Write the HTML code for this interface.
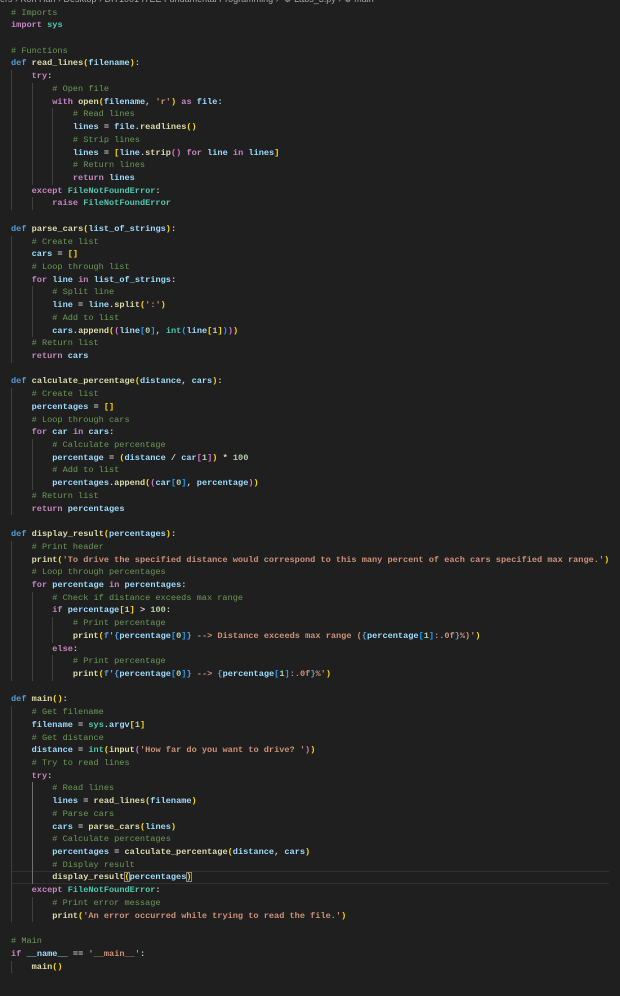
<!DOCTYPE html>
<html><head><meta charset="utf-8"><style>
html,body{margin:0;padding:0;background:#1f1f1f;width:620px;height:996px;overflow:hidden}
.bc{position:absolute;top:-6px;left:0;font:9px "Liberation Sans",sans-serif;color:#a9a9a9;white-space:pre}
.code{position:absolute;left:11px;top:6.6px;margin:0;font-family:"Liberation Mono",monospace;font-size:8.6px;line-height:12.73px;color:#d4d4d4;font-weight:bold}
.code div{height:12.73px;white-space:pre}
i{display:inline-block;width:4ch;height:12.73px;vertical-align:top;box-shadow:inset 1px 0 0 #404040;font-style:normal}
.c{color:#6a9955;font-weight:normal}.k{color:#c586c0}.d{color:#569cd6}.f{color:#dcdcaa}.v{color:#9cdcfe}.s{color:#ce9178}.n{color:#b5cea8}.t{color:#4ec9b0}
.b1{color:#ffd700}.b2{color:#da70d6}.b3{color:#179fff}.o{color:#d4d4d4}
</style></head><body>
<div class="bc">ers › Kon Han › Desktop › DIT1001 ITEE Fundamental Programming ›  ⚙ Labs_3.py › ⚙ main</div>
<div class="code"><div><span class="c"># Imports</span></div>
<div><span class="k">import</span> <span class="t">sys</span></div>
<div></div>
<div><span class="c"># Functions</span></div>
<div><span class="d">def</span> <span class="f">read_lines</span><span class="b1">(</span><span class="v">filename</span><span class="b1">)</span>:</div>
<div><i></i><span class="k">try</span>:</div>
<div><i></i><i></i><span class="c"># Open file</span></div>
<div><i></i><i></i><span class="k">with</span> <span class="f">open</span><span class="b1">(</span><span class="v">filename</span>, <span class="s">'r'</span><span class="b1">)</span> <span class="k">as</span> <span class="v">file</span>:</div>
<div><i></i><i></i><i></i><span class="c"># Read lines</span></div>
<div><i></i><i></i><i></i><span class="v">lines</span> = <span class="v">file</span>.<span class="f">readlines</span><span class="b1">()</span></div>
<div><i></i><i></i><i></i><span class="c"># Strip lines</span></div>
<div><i></i><i></i><i></i><span class="v">lines</span> = <span class="b1">[</span><span class="v">line</span>.<span class="f">strip</span><span class="b2">()</span> <span class="k">for</span> <span class="v">line</span> <span class="k">in</span> <span class="v">lines</span><span class="b1">]</span></div>
<div><i></i><i></i><i></i><span class="c"># Return lines</span></div>
<div><i></i><i></i><i></i><span class="k">return</span> <span class="v">lines</span></div>
<div><i></i><span class="k">except</span> <span class="t">FileNotFoundError</span>:</div>
<div><i></i><i></i><span class="k">raise</span> <span class="t">FileNotFoundError</span></div>
<div></div>
<div><span class="d">def</span> <span class="f">parse_cars</span><span class="b1">(</span><span class="v">list_of_strings</span><span class="b1">)</span>:</div>
<div><i></i><span class="c"># Create list</span></div>
<div><i></i><span class="v">cars</span> = <span class="b1">[]</span></div>
<div><i></i><span class="c"># Loop through list</span></div>
<div><i></i><span class="k">for</span> <span class="v">line</span> <span class="k">in</span> <span class="v">list_of_strings</span>:</div>
<div><i></i><i></i><span class="c"># Split line</span></div>
<div><i></i><i></i><span class="v">line</span> = <span class="v">line</span>.<span class="f">split</span><span class="b1">(</span><span class="s">':'</span><span class="b1">)</span></div>
<div><i></i><i></i><span class="c"># Add to list</span></div>
<div><i></i><i></i><span class="v">cars</span>.<span class="f">append</span><span class="b1">(</span><span class="b2">(</span><span class="v">line</span><span class="b3">[</span><span class="n">0</span><span class="b3">]</span>, <span class="t">int</span><span class="b3">(</span><span class="v">line</span><span class="b1">[</span><span class="n">1</span><span class="b1">]</span><span class="b3">)</span><span class="b2">)</span><span class="b1">)</span></div>
<div><i></i><span class="c"># Return list</span></div>
<div><i></i><span class="k">return</span> <span class="v">cars</span></div>
<div></div>
<div><span class="d">def</span> <span class="f">calculate_percentage</span><span class="b1">(</span><span class="v">distance</span>, <span class="v">cars</span><span class="b1">)</span>:</div>
<div><i></i><span class="c"># Create list</span></div>
<div><i></i><span class="v">percentages</span> = <span class="b1">[]</span></div>
<div><i></i><span class="c"># Loop through cars</span></div>
<div><i></i><span class="k">for</span> <span class="v">car</span> <span class="k">in</span> <span class="v">cars</span>:</div>
<div><i></i><i></i><span class="c"># Calculate percentage</span></div>
<div><i></i><i></i><span class="v">percentage</span> = <span class="b1">(</span><span class="v">distance</span> / <span class="v">car</span><span class="b2">[</span><span class="n">1</span><span class="b2">]</span><span class="b1">)</span> * <span class="n">100</span></div>
<div><i></i><i></i><span class="c"># Add to list</span></div>
<div><i></i><i></i><span class="v">percentages</span>.<span class="f">append</span><span class="b1">(</span><span class="b2">(</span><span class="v">car</span><span class="b3">[</span><span class="n">0</span><span class="b3">]</span>, <span class="v">percentage</span><span class="b2">)</span><span class="b1">)</span></div>
<div><i></i><span class="c"># Return list</span></div>
<div><i></i><span class="k">return</span> <span class="v">percentages</span></div>
<div></div>
<div><span class="d">def</span> <span class="f">display_result</span><span class="b1">(</span><span class="v">percentages</span><span class="b1">)</span>:</div>
<div><i></i><span class="c"># Print header</span></div>
<div><i></i><span class="f">print</span><span class="b1">(</span><span class="s">'To drive the specified distance would correspond to this many percent of each cars specified max range.'</span><span class="b1">)</span></div>
<div><i></i><span class="c"># Loop through percentages</span></div>
<div><i></i><span class="k">for</span> <span class="v">percentage</span> <span class="k">in</span> <span class="v">percentages</span>:</div>
<div><i></i><i></i><span class="c"># Check if distance exceeds max range</span></div>
<div><i></i><i></i><span class="k">if</span> <span class="v">percentage</span><span class="b1">[</span><span class="n">1</span><span class="b1">]</span> &gt; <span class="n">100</span>:</div>
<div><i></i><i></i><i></i><span class="c"># Print percentage</span></div>
<div><i></i><i></i><i></i><span class="f">print</span><span class="b1">(</span><span class="d">f</span><span class="s">'</span><span class="d">{</span><span class="v">percentage</span><span class="b3">[</span><span class="n">0</span><span class="b3">]</span><span class="d">}</span><span class="s"> --&gt; Distance exceeds max range (</span><span class="d">{</span><span class="v">percentage</span><span class="b3">[</span><span class="n">1</span><span class="b3">]</span><span class="s">:.0f</span><span class="d">}</span><span class="s">%)'</span><span class="b1">)</span></div>
<div><i></i><i></i><span class="k">else</span>:</div>
<div><i></i><i></i><i></i><span class="c"># Print percentage</span></div>
<div><i></i><i></i><i></i><span class="f">print</span><span class="b1">(</span><span class="d">f</span><span class="s">'</span><span class="d">{</span><span class="v">percentage</span><span class="b3">[</span><span class="n">0</span><span class="b3">]</span><span class="d">}</span><span class="s"> --&gt; </span><span class="d">{</span><span class="v">percentage</span><span class="b3">[</span><span class="n">1</span><span class="b3">]</span><span class="s">:.0f</span><span class="d">}</span><span class="s">%'</span><span class="b1">)</span></div>
<div></div>
<div><span class="d">def</span> <span class="f">main</span><span class="b1">()</span>:</div>
<div><i></i><span class="c"># Get filename</span></div>
<div><i></i><span class="v">filename</span> = <span class="t">sys</span>.<span class="v">argv</span><span class="b1">[</span><span class="n">1</span><span class="b1">]</span></div>
<div><i></i><span class="c"># Get distance</span></div>
<div><i></i><span class="v">distance</span> = <span class="t">int</span><span class="b1">(</span><span class="f">input</span><span class="b2">(</span><span class="s">'How far do you want to drive? '</span><span class="b2">)</span><span class="b1">)</span></div>
<div><i></i><span class="c"># Try to read lines</span></div>
<div><i></i><span class="k">try</span>:</div>
<div><i></i><i style="box-shadow:inset 1px 0 0 #707070"></i><span class="c"># Read lines</span></div>
<div><i></i><i style="box-shadow:inset 1px 0 0 #707070"></i><span class="v">lines</span> = <span class="f">read_lines</span><span class="b1">(</span><span class="v">filename</span><span class="b1">)</span></div>
<div><i></i><i style="box-shadow:inset 1px 0 0 #707070"></i><span class="c"># Parse cars</span></div>
<div><i></i><i style="box-shadow:inset 1px 0 0 #707070"></i><span class="v">cars</span> = <span class="f">parse_cars</span><span class="b1">(</span><span class="v">lines</span><span class="b1">)</span></div>
<div><i></i><i style="box-shadow:inset 1px 0 0 #707070"></i><span class="c"># Calculate percentages</span></div>
<div><i></i><i style="box-shadow:inset 1px 0 0 #707070"></i><span class="v">percentages</span> = <span class="f">calculate_percentage</span><span class="b1">(</span><span class="v">distance</span>, <span class="v">cars</span><span class="b1">)</span></div>
<div><i></i><i style="box-shadow:inset 1px 0 0 #707070"></i><span class="c"># Display result</span></div>
<div style="box-shadow:inset 0 1px 0 #303030,inset 0 -1px 0 #303030"><i></i><i style="box-shadow:inset 1px 0 0 #707070"></i><span class="f">display_result</span><span class="b1" style="outline:1px solid #888;outline-offset:-1px">(</span><span class="v">percentages</span><span class="b1" style="outline:1px solid #888;outline-offset:-1px">)</span></div>
<div><i></i><span class="k">except</span> <span class="t">FileNotFoundError</span>:</div>
<div><i></i><i></i><span class="c"># Print error message</span></div>
<div><i></i><i></i><span class="f">print</span><span class="b1">(</span><span class="s">'An error occurred while trying to read the file.'</span><span class="b1">)</span></div>
<div></div>
<div><span class="c"># Main</span></div>
<div><span class="k">if</span> <span class="v">__name__</span> == <span class="s">'__main__'</span>:</div>
<div><i></i><span class="f">main</span><span class="b1">()</span></div>
</div>
</body></html>
